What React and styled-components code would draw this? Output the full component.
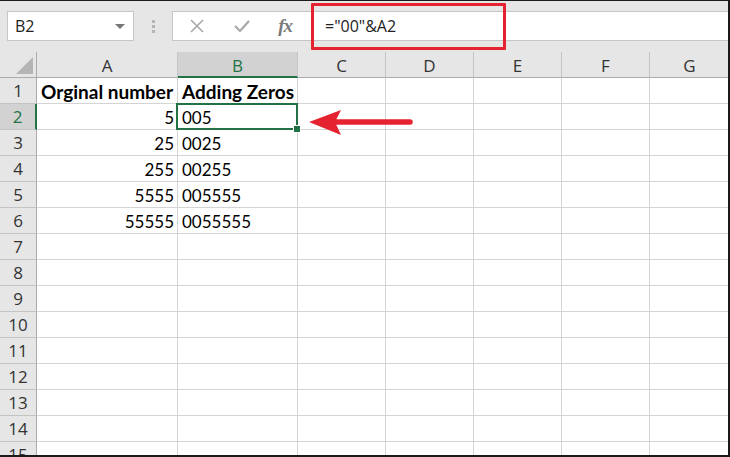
import styled, { createGlobalStyle } from 'styled-components';

const GlobalStyle = createGlobalStyle`
  html, body {
    margin: 0;
    padding: 0;
    background: #ffffff;
  }
  body {
    font-family: Lato, "Liberation Sans", sans-serif;
  }
`;

const COLS = ['A', 'B', 'C', 'D', 'E', 'F', 'G'];
const WIDTHS = [37, 141, 120, 88, 88, 88, 88, 80];
const DATA = [
  ['Orginal number', 'Adding Zeros', true],
  ['5', '005'],
  ['25', '0025'],
  ['255', '00255'],
  ['5555', '005555'],
  ['55555', '0055555'],
];
const ROWS = 15;

const Window = styled.div`
  position: relative;
  width: 730px;
  height: 457px;
  box-sizing: border-box;
  border-top: 1px solid #1a1a1a;
  border-right: 2px solid #1a1a1a;
  border-bottom: 2px solid #1a1a1a;
  background: #e6e6e6;
  overflow: hidden;
  display: flex;
  flex-direction: column;
`;

const Toolbar = styled.div`
  height: 51px;
  display: flex;
  align-items: flex-start;
  padding: 10px 0 0 7px;
  box-sizing: border-box;
  flex-shrink: 0;
`;

const NameBox = styled.div`
  width: 127px;
  height: 30px;
  box-sizing: border-box;
  background: #fff;
  border: 1px solid #c6c6c6;
  display: flex;
  align-items: center;
  justify-content: space-between;
  padding: 0 8px 0 7px;
  font-family: "Open Sans", "Noto Sans", sans-serif;
  font-size: 16px;
  color: #222;
`;

const Caret = styled.span`
  width: 0;
  height: 0;
  border-left: 5px solid transparent;
  border-right: 5px solid transparent;
  border-top: 5px solid #777;
`;

const Grip = styled.div`
  width: 38px;
  height: 30px;
  display: flex;
  flex-direction: column;
  align-items: center;
  justify-content: center;
  gap: 2px;
  & > span {
    width: 3px;
    height: 3px;
    background: #b5b5b5;
  }
`;

const FormulaBar = styled.div`
  flex: 1;
  height: 30px;
  box-sizing: border-box;
  background: #fff;
  border: 1px solid #c6c6c6;
  border-right: none;
  display: flex;
  align-items: center;
`;

const Buttons = styled.div`
  width: 133px;
  display: flex;
  align-items: center;
  justify-content: space-around;
  padding-left: 2px;
  box-sizing: border-box;
`;

const Fx = styled.span`
  font-family: "Liberation Serif", serif;
  font-style: italic;
  font-weight: bold;
  font-size: 19px;
  color: #7a7a7a;
  letter-spacing: -1px;
`;

const Formula = styled.div`
  padding-left: 19px;
  font-family: "Open Sans", "Noto Sans", sans-serif;
  font-size: 16px;
  color: #222;
`;

const Highlight = styled.div`
  position: absolute;
  left: 311px;
  top: 2px;
  width: 195px;
  height: 47px;
  box-sizing: border-box;
  border: 3px solid #e52330;
  border-radius: 1px;
`;

const Sheet = styled.div`
  display: grid;
  grid-template-columns: ${WIDTHS.map((w) => w + 'px').join(' ')};
  grid-auto-rows: 26px;
  background: #fff;
  flex: 1;
`;

const Corner = styled.div`
  background: #e6e6e6;
  border-right: 1px solid #ababab;
  border-bottom: 1px solid #ababab;
  display: flex;
  align-items: flex-end;
  justify-content: flex-end;
  padding: 0 3px 3px 0;
`;

const ColHeader = styled.div`
  background: ${(p) => (p.$active ? '#d2d2d2' : '#e6e6e6')};
  color: ${(p) => (p.$active ? '#217346' : '#333')};
  border-right: 1px solid #c4c4c4;
  border-bottom: ${(p) => (p.$active ? '2px solid #217346' : '1px solid #ababab')};
  box-sizing: border-box;
  display: flex;
  align-items: center;
  justify-content: center;
  font-family: "Open Sans", "Noto Sans", sans-serif;
  font-size: 17px;
  padding-top: 2px;
`;

const RowHeader = styled.div`
  background: ${(p) => (p.$active ? '#d2d2d2' : '#e6e6e6')};
  color: ${(p) => (p.$active ? '#217346' : '#333')};
  border-right: ${(p) => (p.$active ? '2px solid #217346' : '1px solid #ababab')};
  border-bottom: 1px solid #c4c4c4;
  box-sizing: border-box;
  display: flex;
  align-items: center;
  justify-content: center;
  font-family: "Open Sans", "Noto Sans", sans-serif;
  font-size: 17px;
`;

const Cell = styled.div`
  position: relative;
  border-right: 1px solid #d4d4d4;
  border-bottom: 1px solid #d4d4d4;
  box-sizing: border-box;
  display: flex;
  align-items: center;
  justify-content: ${(p) => (p.$right ? 'flex-end' : 'flex-start')};
  padding: 1px 3px 0 4px;
  font-family: Lato, "Liberation Sans", sans-serif;
  font-size: ${(p) => (p.$bold ? '19px' : '17px')};
  font-weight: ${(p) => (p.$bold ? 700 : 400)};
  color: #000;
  white-space: nowrap;

  ${(p) =>
    p.$active &&
    `
    &::after {
      content: '';
      position: absolute;
      left: -2px;
      top: -1px;
      right: -1px;
      bottom: -1px;
      border: 2px solid #217346;
      z-index: 2;
    }
    &::before {
      content: '';
      position: absolute;
      right: -4px;
      bottom: -4px;
      width: 6px;
      height: 6px;
      background: #217346;
      border: 1px solid #fff;
      z-index: 3;
    }
  `}
`;

const Arrow = styled.svg`
  position: absolute;
  left: 306px;
  top: 107px;
`;

export default function App() {
  const rows = [];
  for (let r = 1; r <= ROWS; r++) {
    const d = DATA[r - 1] || [];
    rows.push(
      <RowHeader key={'h' + r} $active={r === 2}>
        {r}
      </RowHeader>
    );
    COLS.forEach((c, i) => {
      let text = '';
      if (i === 0) text = d[0] || '';
      if (i === 1) text = d[1] || '';
      rows.push(
        <Cell
          key={c + r}
          $right={i === 0 && r > 1}
          $bold={!!d[2]}
          $active={i === 1 && r === 2}
        >
          {text}
        </Cell>
      );
    });
  }

  return (
    <>
      <GlobalStyle />
      <Window>
        <Toolbar>
          <NameBox>
            B2
            <Caret />
          </NameBox>
          <Grip>
            <span />
            <span />
            <span />
          </Grip>
          <FormulaBar>
            <Buttons>
              <svg width="16" height="16" viewBox="0 0 16 16">
                <path d="M2 2 L14 14 M14 2 L2 14" stroke="#a8a8a8" strokeWidth="1.6" fill="none" />
              </svg>
              <svg width="18" height="16" viewBox="0 0 18 16">
                <path d="M2 8 L7 13 L16 3" stroke="#a8a8a8" strokeWidth="2.2" fill="none" />
              </svg>
              <Fx>fx</Fx>
            </Buttons>
            <Formula>="00"&amp;A2</Formula>
          </FormulaBar>
        </Toolbar>
        <Sheet>
          <Corner>
            <svg width="17" height="17" viewBox="0 0 17 17">
              <polygon points="17,0 17,17 0,17" fill="#b5b5b5" />
            </svg>
          </Corner>
          {COLS.map((c) => (
            <ColHeader key={c} $active={c === 'B'}>
              {c}
            </ColHeader>
          ))}
          {rows}
        </Sheet>
        <Highlight />
        <Arrow width="110" height="30" viewBox="0 0 110 30">
          <polygon points="3,14 35,2 29,14 35,27" fill="#e52330" />
          <line x1="28" y1="14" x2="104" y2="14" stroke="#e52330" strokeWidth="5.5" strokeLinecap="round" />
        </Arrow>
      </Window>
    </>
  );
}
